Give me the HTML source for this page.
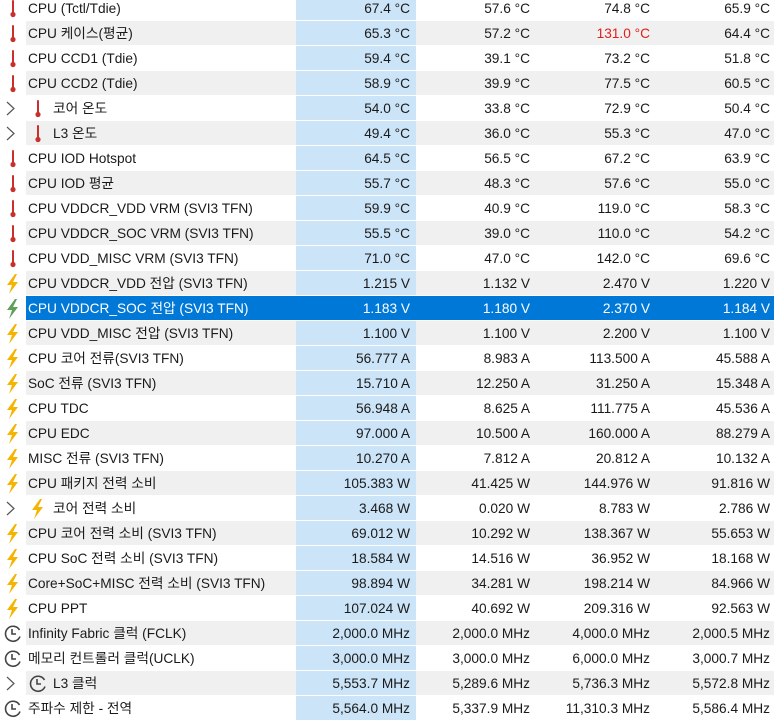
<!DOCTYPE html>
<html><head><meta charset="utf-8"><style>
body{margin:0;width:774px;height:722px;overflow:hidden;background:#fff;font-family:"Liberation Sans","Noto Sans CJK KR",sans-serif;font-size:13.7px;color:#1a1a1a;position:relative}
.r{position:absolute;left:0;width:774px;height:25px;line-height:25px}
.g .bg{position:absolute;left:26px;right:0;top:0;bottom:1px;background:#f0f0f0}
.s .bg{position:absolute;left:26px;right:0;top:0;bottom:1px;background:#0078d7}
.col{position:absolute;left:296px;width:120px;top:0;bottom:1px;background:#cce4f7}
.s .col{background:#0078d7}
.n{position:absolute;left:28px;top:0;white-space:nowrap}
.i .n{left:53px}
.v{position:absolute;top:0;text-align:right;white-space:nowrap}
.v1{right:364px}.v2{right:244px}.v3{right:124px}.v4{right:4px}
.s .n,.s .v{color:#fff}
.red{color:#e0201c}
svg{position:absolute;top:0}
</style></head><body>
<div id="t"></div>
<script>
const T='<svg width="26" height="25" viewBox="0 0 26 25" style="left:OFFpx"><rect x="12" y="4" width="2" height="13" rx="1" fill="#c9302c"/><circle cx="13" cy="18.5" r="2.6" fill="#c9302c"/></svg>';
const L='<svg width="26" height="25" viewBox="0 0 26 25" style="left:OFFpx"><polygon points="15,3 7,14 12,14 9,23 18,11 13,11 17,3" fill="COL"/></svg>';
const C='<svg width="26" height="25" viewBox="0 0 26 25" style="left:OFFpx"><path d="M19.5 9 A7.5 7.5 0 1 0 20 15.5" fill="none" stroke="#444" stroke-width="1.6"/><path d="M12 8v5h4" fill="none" stroke="#444" stroke-width="1.6"/></svg>';
const CH='<svg width="18" height="25" viewBox="0 0 18 25" style="left:2px"><path d="M5 6l7 6.5-7 6.5" fill="none" stroke="#555" stroke-width="1.2"/></svg>';
const rows=[
['T','CPU (Tctl/Tdie)','67.4 °C','57.6 °C','74.8 °C','65.9 °C'],
['T','CPU 케이스(평균)','65.3 °C','57.2 °C','131.0 °C','64.4 °C'],
['T','CPU CCD1 (Tdie)','59.4 °C','39.1 °C','73.2 °C','51.8 °C'],
['T','CPU CCD2 (Tdie)','58.9 °C','39.9 °C','77.5 °C','60.5 °C'],
['Ti','코어 온도','54.0 °C','33.8 °C','72.9 °C','50.4 °C'],
['Ti','L3 온도','49.4 °C','36.0 °C','55.3 °C','47.0 °C'],
['T','CPU IOD Hotspot','64.5 °C','56.5 °C','67.2 °C','63.9 °C'],
['T','CPU IOD 평균','55.7 °C','48.3 °C','57.6 °C','55.0 °C'],
['T','CPU VDDCR_VDD VRM (SVI3 TFN)','59.9 °C','40.9 °C','119.0 °C','58.3 °C'],
['T','CPU VDDCR_SOC VRM (SVI3 TFN)','55.5 °C','39.0 °C','110.0 °C','54.2 °C'],
['T','CPU VDD_MISC VRM (SVI3 TFN)','71.0 °C','47.0 °C','142.0 °C','69.6 °C'],
['L','CPU VDDCR_VDD 전압 (SVI3 TFN)','1.215 V','1.132 V','2.470 V','1.220 V'],
['Ls','CPU VDDCR_SOC 전압 (SVI3 TFN)','1.183 V','1.180 V','2.370 V','1.184 V'],
['L','CPU VDD_MISC 전압 (SVI3 TFN)','1.100 V','1.100 V','2.200 V','1.100 V'],
['L','CPU 코어 전류(SVI3 TFN)','56.777 A','8.983 A','113.500 A','45.588 A'],
['L','SoC 전류 (SVI3 TFN)','15.710 A','12.250 A','31.250 A','15.348 A'],
['L','CPU TDC','56.948 A','8.625 A','111.775 A','45.536 A'],
['L','CPU EDC','97.000 A','10.500 A','160.000 A','88.279 A'],
['L','MISC 전류 (SVI3 TFN)','10.270 A','7.812 A','20.812 A','10.132 A'],
['L','CPU 패키지 전력 소비','105.383 W','41.425 W','144.976 W','91.816 W'],
['Li','코어 전력 소비','3.468 W','0.020 W','8.783 W','2.786 W'],
['L','CPU 코어 전력 소비 (SVI3 TFN)','69.012 W','10.292 W','138.367 W','55.653 W'],
['L','CPU SoC 전력 소비 (SVI3 TFN)','18.584 W','14.516 W','36.952 W','18.168 W'],
['L','Core+SoC+MISC 전력 소비 (SVI3 TFN)','98.894 W','34.281 W','198.214 W','84.966 W'],
['L','CPU PPT','107.024 W','40.692 W','209.316 W','92.563 W'],
['C','Infinity Fabric 클럭 (FCLK)','2,000.0 MHz','2,000.0 MHz','4,000.0 MHz','2,000.5 MHz'],
['C','메모리 컨트롤러 클럭(UCLK)','3,000.0 MHz','3,000.0 MHz','6,000.0 MHz','3,000.7 MHz'],
['Ci','L3 클럭','5,553.7 MHz','5,289.6 MHz','5,736.3 MHz','5,572.8 MHz'],
['C','주파수 제한 - 전역','5,564.0 MHz','5,337.9 MHz','11,310.3 MHz','5,586.4 MHz']];
let h='';
rows.forEach((r,i)=>{
 const k=r[0],ind=k.includes('i'),sel=k.includes('s');
 let cls='r'+(sel?' s':(i%2?' g':''))+(ind?' i':'');
 let ic=k[0]=='T'?T:k[0]=='L'?L:C;
 ic=ic.replace('OFF',ind?25:0).replace('COL',sel?'#5f9f5a':'#f5b400');
 h+=`<div class="${cls}" style="top:${-4+25*i}px"><div class="bg"></div><div class="col"></div>${ind?CH:''}${ic}<div class="n">${r[1]}</div><div class="v v1">${r[2]}</div><div class="v v2">${r[3]}</div><div class="v v3${r[4]=='131.0 °C'?' red':''}">${r[4]}</div><div class="v v4">${r[5]}</div></div>`;
});
document.getElementById('t').innerHTML=h;
</script>
</body></html>
